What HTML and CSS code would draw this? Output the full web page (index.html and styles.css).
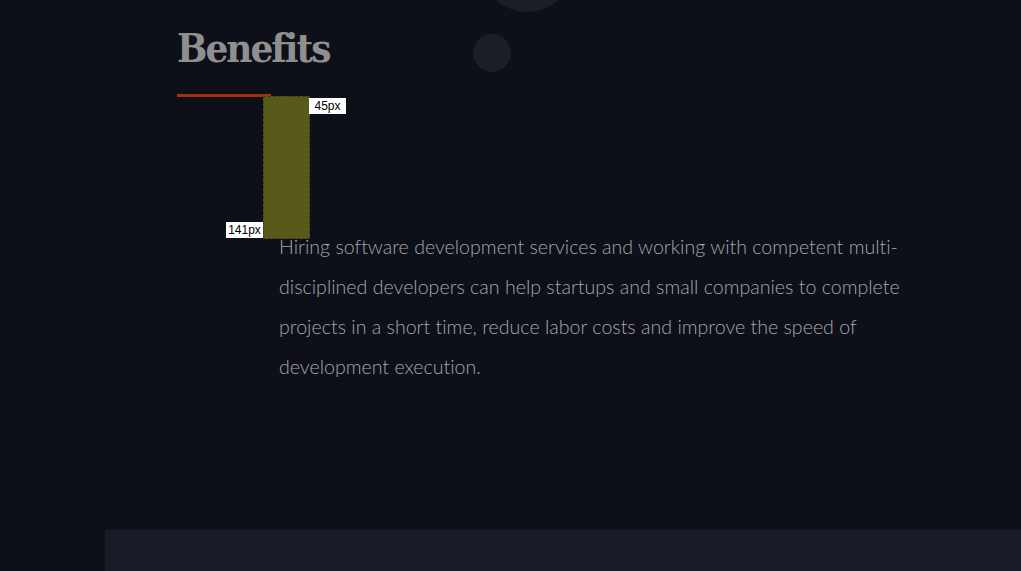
FILE: index.html
```html
<!DOCTYPE html>
<html lang="en">
<head>
    <meta charset="UTF-8">
    <meta name="viewport" content="width=device-width, initial-scale=1.0">
    <title>Benefits</title>
    <link rel="stylesheet" href="styles.css">
</head>
<body>
    <!-- background bubbles -->
    <div class="bubble bubble-big"></div>
    <div class="bubble bubble-small"></div>

    <section class="benefits">
        <h2 class="section-title">Benefits</h2>
        <div class="title-line"></div>

        <div class="benefits-body">
            <!-- spacing overlay -->
            <div class="spacer-box">
                <span class="spacer-label label-w">45px</span>
                <span class="spacer-label label-h">141px</span>
            </div>
            <p class="benefits-text">Hiring software development services and working with competent multi-disciplined developers can help startups and small companies to complete projects in a short time, reduce labor costs and improve the speed of development execution.</p>
        </div>
    </section>

    <div class="next-section"></div>
</body>
</html>
```

FILE: styles.css
```css
body {
    margin: 0;
    background-color: #0d1019;
    font-family: 'Lato', 'Liberation Sans', sans-serif;
    overflow: hidden;
    height: 571px;
    position: relative;
}
.bubble {
    position: absolute;
    border-radius: 50%;
    background-color: #1b1e27;
}
.bubble-big {
    width: 96px;
    height: 96px;
    left: 479px;
    top: -84px;
}
.bubble-small {
    width: 38px;
    height: 38px;
    left: 473px;
    top: 34px;
}
.benefits {
    padding: 20px 0 0 177px;
    position: relative;
}
.section-title {
    margin: 0;
    font-family: 'DejaVu Serif', serif;
    font-stretch: condensed;
    font-weight: bold;
    font-size: 40px;
    letter-spacing: -2px;
    line-height: 56px;
    color: #8f8f8f;
}
.title-line {
    width: 94px;
    height: 3px;
    margin-top: 18px;
    background-color: #a42d0c;
}
.benefits-body {
    position: relative;
    padding-left: 102px;
    padding-top: 130px;
    width: 640px;
}
.spacer-box {
    position: absolute;
    left: 86px;
    top: -1px;
    width: 45px;
    height: 141px;
    background-color: #575a1b;
    border: 1px dashed #3c3e1a;
}
.spacer-label {
    position: absolute;
    min-width: 33px;
    text-align: center;
    background-color: #fff;
    color: #000;
    font-family: 'Liberation Sans', Arial, sans-serif;
    font-size: 12px;
    line-height: 16px;
    padding: 0 2px;
}
.label-w {
    left: 45px;
    top: 1px;
}
.label-h {
    right: 46px;
    bottom: 0;
}
.benefits-text {
    margin: 0;
    font-weight: 300;
    font-size: 19.6px;
    font-variant-ligatures: none;
    line-height: 40px;
    color: #a6a6a6;
}
.next-section {
    position: absolute;
    left: 105px;
    right: 0;
    top: 530px;
    height: 41px;
    background-color: #171c27;
}
```
